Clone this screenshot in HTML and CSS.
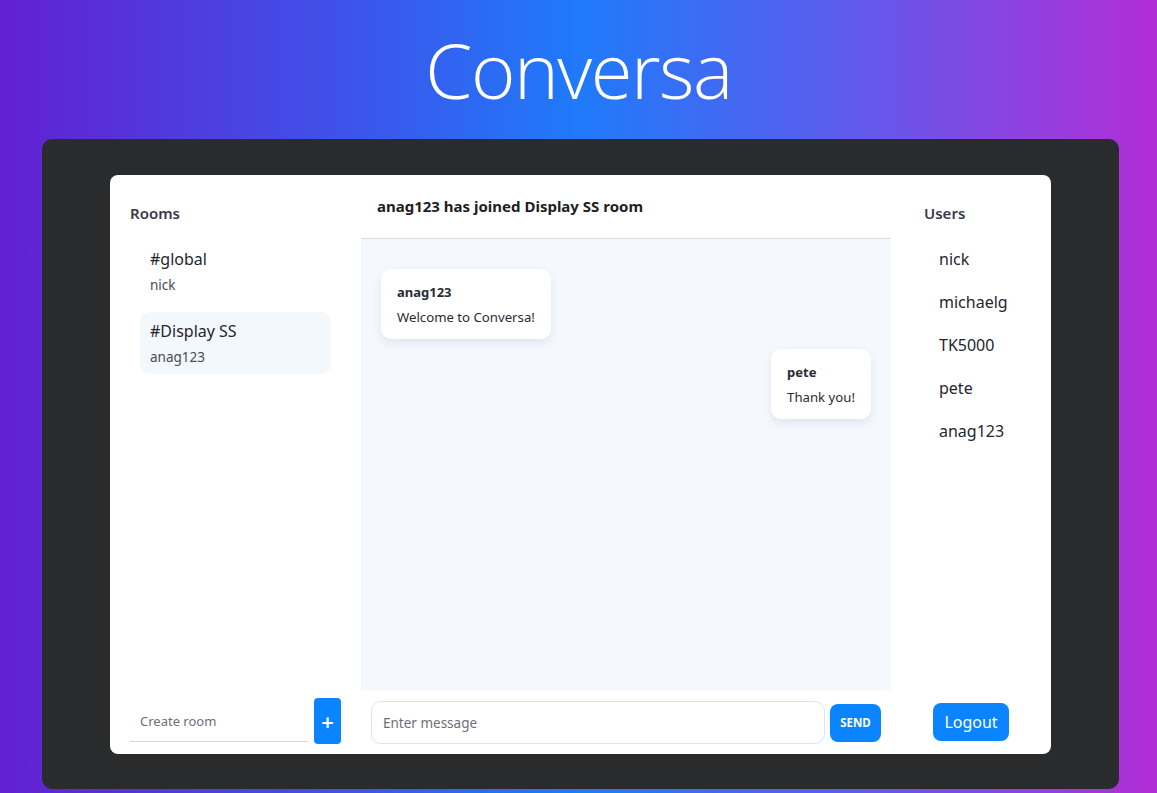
FILE: index.html
```html
<!DOCTYPE html>
<html lang="en">
<head>
<meta charset="UTF-8">
<meta name="viewport" content="width=device-width, initial-scale=1.0">
<title>Conversa</title>
<link rel="stylesheet" href="styles.css">
</head>
<body>
    <h1 class="brand">Conversa</h1>
    <main class="shell">
        <div class="chat-card">
            <aside class="rooms">
                <h2 class="col-title">Rooms</h2>
                <ul class="room-list">
                    <li class="room">
                        <span class="room-name">#global</span>
                        <span class="room-user">nick</span>
                    </li>
                    <li class="room active">
                        <span class="room-name">#Display SS</span>
                        <span class="room-user">anag123</span>
                    </li>
                </ul>
                <form class="create-room">
                    <input type="text" placeholder="Create room">
                    <button type="button" class="btn btn-add">+</button>
                </form>
            </aside>

            <section class="chat">
                <header class="chat-head">anag123 has joined Display SS room</header>
                <div class="messages">
                    <div class="msg">
                        <div class="msg-author">anag123</div>
                        <div class="msg-text">Welcome to Conversa!</div>
                    </div>
                    <div class="msg own">
                        <div class="msg-author">pete</div>
                        <div class="msg-text">Thank you!</div>
                    </div>
                </div>
                <form class="send-form">
                    <input type="text" placeholder="Enter message">
                    <button type="button" class="btn btn-send">SEND</button>
                </form>
            </section>

            <aside class="users">
                <h2 class="col-title">Users</h2>
                <ul class="user-list">
                    <li>nick</li>
                    <li>michaelg</li>
                    <li>TK5000</li>
                    <li>pete</li>
                    <li>anag123</li>
                </ul>
                <div class="logout-wrap">
                    <button type="button" class="btn btn-logout">Logout</button>
                </div>
            </aside>
        </div>
    </main>
</body>
</html>
```

FILE: styles.css
```css
:root{
    --blue:#0a84ff;
    --ink:#25252d;
    --muted:#4a4a55;
    --line:#d8d8e4;
    --pane:#f5f9fd;
}
*{box-sizing:border-box;}
body{
    margin:0;
    min-height:100vh;
    font-family:"Noto Sans","Open Sans",Arial,sans-serif;
    color:var(--ink);
    background:linear-gradient(90deg,#6320d3 0%,#3e53e9 30%,#1f7afa 50%,#5a5ded 72%,#b22dd6 100%);
}
.brand{
    margin:0;
    padding:25px 0 0;
    height:139px;
    text-align:center;
    font-family:"Open Sans","Noto Sans",sans-serif;
    font-weight:300;
    font-size:76px;
    line-height:90px;
    letter-spacing:-1.5px;
    color:#fff;
}
.shell{
    width:1077px;
    margin:0 0 0 42px;
    padding:36px 68px 35px;
    background:#2a2b2d;
    border-radius:10px;
}
.chat-card{
    display:grid;
    grid-template-columns:251px 530px 1fr;
    height:579px;
    background:#fff;
    border-radius:8px;
    overflow:hidden;
}
.col-title{
    margin:0;
    font-size:15px;
    font-weight:600;
    color:#3a3a48;
}
ul{list-style:none;margin:0;padding:0;}

/* rooms */
.rooms{
    display:flex;
    flex-direction:column;
    padding:28px 20px 10px;
}
.room-list{
    margin-top:17px;
    padding:0 10px 0 10px;
    flex:1;
}
.room{
    display:flex;
    flex-direction:column;
    height:62px;
    padding:8px 10px;
    margin-bottom:10px;
    border-radius:10px;
}
.room.active{background:#f3f8fd;}
.room-name{font-size:16px;line-height:22px;}
.room-user{font-size:13.5px;line-height:18px;color:var(--muted);margin-top:6px;}
.create-room{
    display:flex;
    align-items:flex-end;
    gap:6px;
}
.create-room input{
    width:178px;
    height:40px;
    border:none;
    border-bottom:1px solid var(--line);
    padding:0 10px 2px;
    font:13px "Noto Sans",sans-serif;
    outline:none;
    margin-bottom:2px;
}
.btn{
    border:none;
    background:var(--blue);
    color:#fff;
    cursor:pointer;
    font-family:"Noto Sans",sans-serif;
}
.btn-add{
    width:27px;
    height:46px;
    border-radius:4px;
    font-size:22px;
    font-weight:600;
    padding:0;
}

/* chat */
.chat{
    display:flex;
    flex-direction:column;
    min-height:0;
}
.chat-head{
    height:64px;
    padding:21px 16px 0;
    font-size:15px;
    font-weight:700;
    color:#1e1e24;
    border-bottom:1px solid var(--line);
}
.messages{
    flex:1;
    background:var(--pane);
    display:flex;
    flex-direction:column;
    align-items:flex-start;
    gap:10px;
    padding:30px 20px;
}
.msg{
    background:#fff;
    border-radius:10px;
    padding:14px 16px 13px;
    box-shadow:0 4px 10px rgba(40,60,110,.1);
}
.msg.own{align-self:flex-end;}
.msg-author{font-size:13px;line-height:18px;font-weight:700;color:#2b2b33;}
.msg-text{font-size:13.2px;line-height:18px;margin-top:7px;color:#2b2b33;}
.send-form{
    display:flex;
    align-items:center;
    gap:5px;
    padding:10px 10px 10px;
}
.send-form input{
    flex:1;
    height:43px;
    border:1px solid #e2e2ee;
    border-radius:10px;
    padding:0 11px;
    font:13.5px "Noto Sans",sans-serif;
    outline:none;
}
.btn-send{
    width:51px;
    height:38px;
    border-radius:8px;
    font-size:11.5px;
    font-weight:700;
}

/* users */
.users{
    display:flex;
    flex-direction:column;
    padding:28px 0 13px 33px;
}
.user-list{
    margin-top:25px;
    padding-left:15px;
    flex:1;
}
.user-list li{
    font-size:16px;
    line-height:22px;
    margin-bottom:21px;
}
.logout-wrap{padding-left:9px;}
.btn-logout{
    width:76px;
    height:38px;
    border-radius:8px;
    font-size:16px;
}
input::placeholder{color:#6e6e78;}
```
